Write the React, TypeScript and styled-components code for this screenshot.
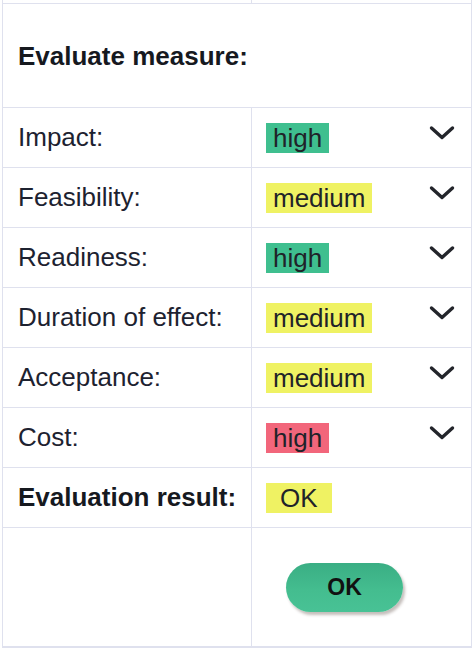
import styled, { createGlobalStyle } from "styled-components";

const GlobalStyle = createGlobalStyle`
  *, *::before, *::after {
    box-sizing: border-box;
  }
  html, body {
    margin: 0;
    padding: 0;
    background: #ffffff;
  }
  body {
    font-family: "Liberation Sans", Arial, sans-serif;
    color: #1b1f2c;
  }
`;

type Level = "high" | "medium" | "bad";

const chipColors: Record<Level, string> = {
  high: "#3fbf8f",
  medium: "#eff263",
  bad: "#f2667b",
};

const rows: { label: string; value: string; level: Level }[] = [
  { label: "Impact:", value: "high", level: "high" },
  { label: "Feasibility:", value: "medium", level: "medium" },
  { label: "Readiness:", value: "high", level: "high" },
  { label: "Duration of effect:", value: "medium", level: "medium" },
  { label: "Acceptance:", value: "medium", level: "medium" },
  { label: "Cost:", value: "high", level: "bad" },
];

const Chevron = () => (
  <svg width="26" height="16" viewBox="0 0 26 16">
    <path
      d="M2.5 3 L13 12.5 L23.5 3"
      fill="none"
      stroke="#23252b"
      strokeWidth="3.4"
      strokeLinecap="round"
      strokeLinejoin="round"
    />
  </svg>
);

const App = () => {
  return (
    <>
      <GlobalStyle />
      <Panel>
        <Row $height={3} $noTop>
          <LabelCell />
          <ValueCell />
        </Row>
        <HeaderRow>
          <HeaderTitle>Evaluate measure:</HeaderTitle>
        </HeaderRow>
        {rows.map((r) => (
          <Row key={r.label} $height={60}>
            <LabelCell>
              <Label>{r.label}</Label>
            </LabelCell>
            <ValueCell>
              <Chip $level={r.level}>{r.value}</Chip>
              <Toggle>
                <Chevron />
              </Toggle>
            </ValueCell>
          </Row>
        ))}
        <Row $height={60}>
          <LabelCell>
            <Label $bold>Evaluation result:</Label>
          </LabelCell>
          <ValueCell>
            <Chip $level="medium" $wide>
              OK
            </Chip>
          </ValueCell>
        </Row>
        <Row $height={121} $bottom>
          <LabelCell />
          <ValueCell>
            <OkButton>OK</OkButton>
          </ValueCell>
        </Row>
      </Panel>
    </>
  );
};

export default App;

const Panel = styled.div`
  margin-left: 2px;
  width: 470px;
  border-left: 1px solid #dfe1ee;
  border-right: 1px solid #dfe1ee;
  display: flex;
  flex-direction: column;
`;

const Row = styled.div<{ $height: number; $noTop?: boolean; $bottom?: boolean }>`
  display: grid;
  grid-template-columns: 249px 1fr;
  height: ${(p) => p.$height}px;
  border-top: ${(p) => (p.$noTop ? "none" : "1px solid #dfe1ee")};
  border-bottom: ${(p) => (p.$bottom ? "2px solid #dfe1ee" : "none")};
`;

const HeaderRow = styled.div`
  height: 104px;
  border-top: 1px solid #dfe1ee;
  display: flex;
  align-items: center;
  padding-left: 15px;
`;

const HeaderTitle = styled.div`
  font-size: 26px;
  font-weight: 700;
  color: #16191f;
  margin-top: 2px;
`;

const LabelCell = styled.div`
  border-right: 1px solid #dfe1ee;
  display: flex;
  align-items: center;
  padding-left: 15px;
`;

const Label = styled.span<{ $bold?: boolean }>`
  font-size: 26px;
  font-weight: ${(p) => (p.$bold ? 700 : 400)};
  color: ${(p) => (p.$bold ? "#16191f" : "#1d2230")};
`;

const ValueCell = styled.div`
  display: flex;
  align-items: center;
  padding-left: 14px;
  padding-right: 16px;
`;

const Chip = styled.span<{ $level: Level; $wide?: boolean }>`
  background: ${(p) => chipColors[p.$level]};
  font-size: 26px;
  line-height: 30px;
  height: 30px;
  padding: 0 ${(p) => (p.$wide ? 14 : 7)}px;
  color: #1f2329;
`;

const Toggle = styled.span`
  margin-left: auto;
  display: flex;
  margin-top: -10px;
`;

const OkButton = styled.button`
  margin-left: 20px;
  width: 117px;
  height: 49px;
  border: none;
  border-radius: 25px;
  background: linear-gradient(180deg, #3aae84 0%, #44bd8f 55%, #48c295 100%);
  box-shadow: 2px 3px 3px rgba(60, 40, 30, 0.3);
  font-family: "Liberation Sans", Arial, sans-serif;
  font-size: 23px;
  font-weight: 700;
  color: #111;
  cursor: pointer;
`;
